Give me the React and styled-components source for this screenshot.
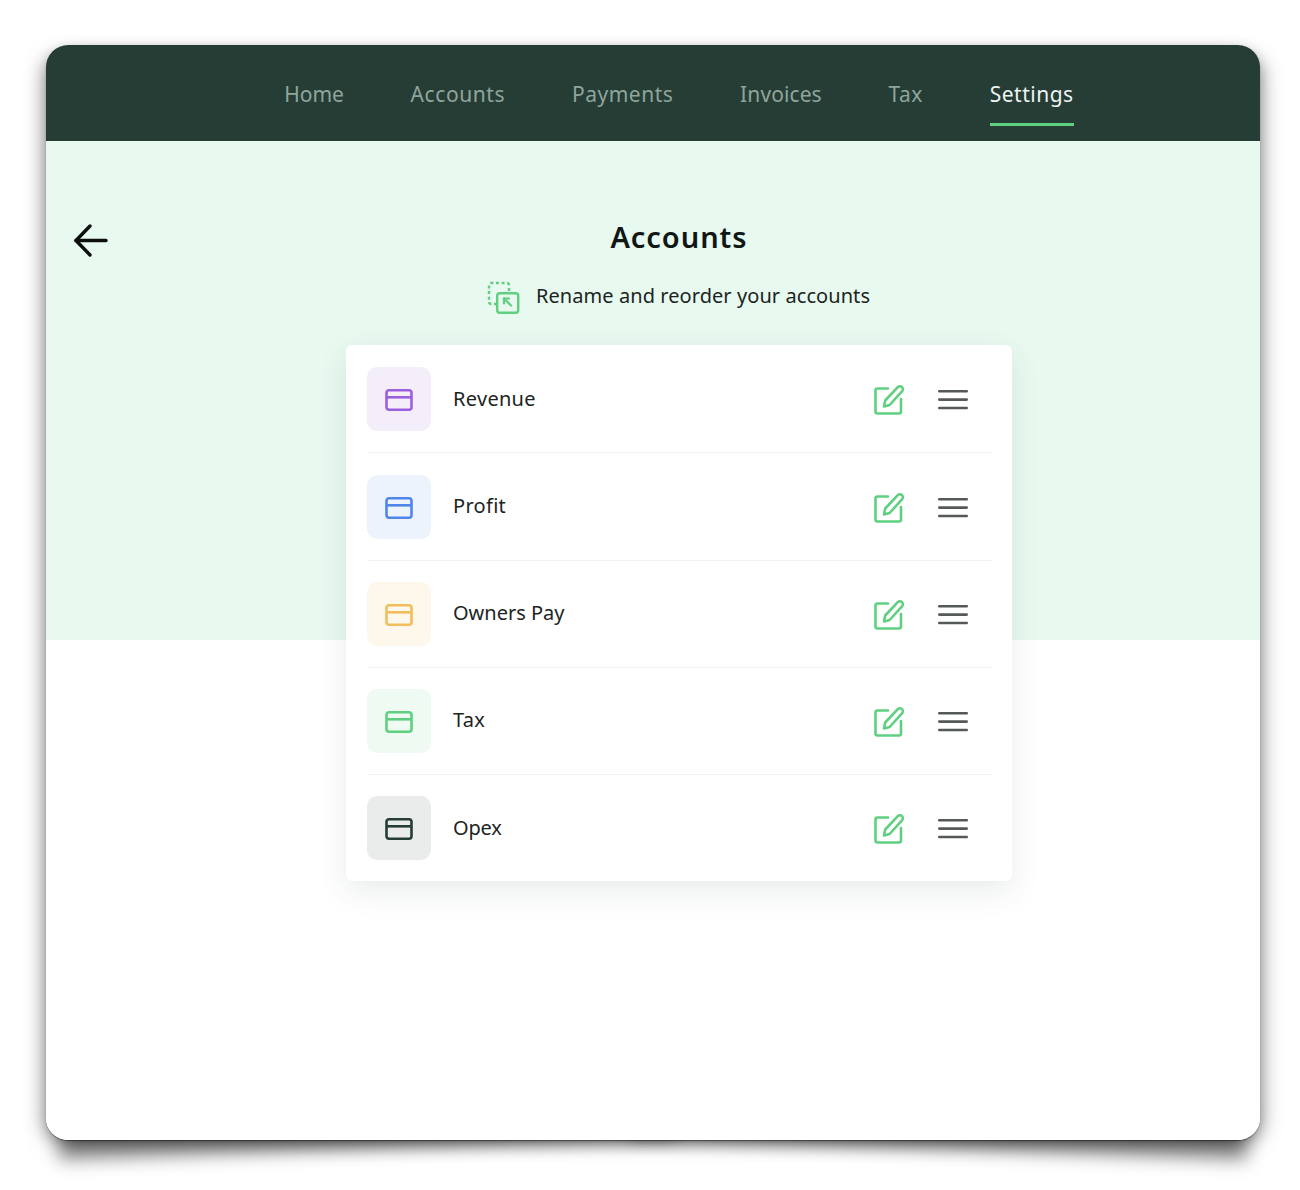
import React from 'react';
import styled, {createGlobalStyle} from "styled-components";

const GlobalStyle = createGlobalStyle`
  html, body {
    margin: 0;
    padding: 0;
    background: #fff;
  }
  * {
    box-sizing: border-box;
  }
  body {
    font-family: "Noto Sans", "Open Sans", sans-serif;
  }
`;

const Page = styled.div`
  width: 1300px;
  height: 1190px;
  padding: 45px 40px 50px 46px;
  overflow: hidden;
`;

const Window = styled.div`
  position: relative;
  isolation: isolate;
  width: 1214px;
  height: 1095px;
  border-radius: 22px;
  box-shadow: -9px 6px 20px -8px rgba(0, 0, 0, 0.5),
    9px 6px 20px -8px rgba(0, 0, 0, 0.5),
    0 -2px 10px rgba(0, 0, 0, 0.05),
    0 1px 1px rgba(0, 0, 0, 0.45);

  /* the lifted corners of the bottom shadow */
  &::before,
  &::after {
    content: "";
    position: absolute;
    z-index: -1;
    bottom: -8px;
    width: 51%;
    height: 40px;
    background: rgba(0, 0, 0, 0.45);
    filter: blur(9px);
  }
  &::before {
    left: 12px;
    transform: rotate(-2.2deg);
  }
  &::after {
    right: 12px;
    transform: rotate(2.2deg);
  }
`;

const Frame = styled.div`
  display: flex;
  flex-direction: column;
  height: 100%;
  border-radius: 22px;
  overflow: hidden;
  background: #fff;
`;

const Nav = styled.nav`
  flex: none;
  display: flex;
  justify-content: center;
  gap: 66.8px;
  height: 96px;
  padding-left: 52px;
  background: #263d36;
`;

const NavItem = styled.a`
  display: flex;
  align-items: center;
  height: 81px;
  padding-top: 20px;
  font-size: 21px;
  letter-spacing: ${(props) => props.spacing}px;
  color: ${(props) => props.active ? "#eef4f1" : "#8ea59c"};
  border-bottom: 3px solid ${(props) => props.active ? "#5fd07f" : "transparent"};
`;

const Main = styled.main`
  flex: 1;
  display: flex;
  padding: 0 10px 0 28px;
  background: linear-gradient(#e8f9f0 499px, #fff 499px);
`;

const BackButton = styled.a`
  flex: none;
  width: 34px;
  height: 34px;
  margin-top: 83px;
  color: #0d0f0e;
`;

const Center = styled.div`
  flex: 1;
  display: flex;
  flex-direction: column;
  align-items: center;
`;

const Title = styled.h1`
  margin: 76px 0 0;
  font-size: 29px;
  line-height: 40px;
  font-weight: 600;
  letter-spacing: 0.95px;
  color: #111714;
`;

const Subtitle = styled.div`
  display: flex;
  align-items: center;
  gap: 16px;
  height: 34px;
  margin-top: 23px;
  padding-right: 2px;
  font-size: 20px;
  letter-spacing: 0.07px;
  color: #1c2421;
`;

const SubtitleText = styled.span`
  padding-bottom: 4px;
`;

const Card = styled.section`
  display: flex;
  flex-direction: column;
  width: 666px;
  height: 536px;
  margin-top: 31px;
  padding: 1.3px 20px 0 21px;
  background: #fff;
  border-radius: 6px;
  box-shadow: 0 10px 30px rgba(38, 61, 54, 0.1);
`;

const Row = styled.div`
  flex: none;
  display: flex;
  align-items: center;
  height: 107.2px;
  padding-right: 24px;
  border-bottom: 1px solid ${(props) => props.last ? "transparent" : "#f0f2f1"};
`;

const IconBox = styled.div`
  flex: none;
  display: flex;
  align-items: center;
  justify-content: center;
  width: 64px;
  height: 64px;
  border-radius: 10px;
  color: ${(props) => props.color};
  background: ${(props) => props.bg};
`;

const Name = styled.span`
  flex: 1;
  margin-left: 22px;
  padding-bottom: 2px;
  font-size: 20px;
  letter-spacing: ${(props) => props.spacing}px;
  color: #1c2421;
`;

const EditButton = styled.a`
  display: flex;
  color: #5fd07f;
  margin-right: 34px;
`;

const DragHandle = styled.a`
  display: flex;
  color: #555957;
`;

const accounts = [
    {name: "Revenue", color: "#9b5fe0", bg: "#f4eefb", spacing: 0.3},
    {name: "Profit", color: "#4f86ec", bg: "#edf3fd", spacing: 0.3},
    {name: "Owners Pay", color: "#f2bd5c", bg: "#fef8ec", spacing: 0},
    {name: "Tax", color: "#5fd07f", bg: "#effaf2", spacing: 0.3},
    {name: "Opex", color: "#263d36", bg: "#e9ecea", spacing: -0.2},
];

const tabs = [
    {label: "Home", spacing: -0.1},
    {label: "Accounts", spacing: 0.6},
    {label: "Payments", spacing: 0.5},
    {label: "Invoices", spacing: 0.1},
    {label: "Tax", spacing: 0.5},
    {label: "Settings", spacing: 0.5, active: true},
];

const ArrowIcon = () => (
    <svg width="34" height="34" viewBox="0 0 34 34" fill="none" stroke="currentColor" strokeWidth="3.4" strokeLinecap="round" strokeLinejoin="round">
        <path d="M32 16.5H2"/>
        <path d="M16 2L2 16.5L16 31"/>
    </svg>
);

const ReorderIcon = () => (
    <svg width="34" height="34" viewBox="0 0 34 34" fill="none" stroke="#5fd07f" strokeWidth="2.4" strokeLinejoin="round">
        <path d="M11 24H5a2 2 0 0 1-2-2V5a2 2 0 0 1 2-2H21a2 2 0 0 1 2 2V13" strokeDasharray="3 2.6"/>
        <rect x="11.2" y="13.2" width="21" height="19.6" rx="2.5"/>
        <g strokeLinecap="round" strokeWidth="2.2">
            <path d="M18 18.5l7 7"/>
            <path d="M18 18.5h5"/>
            <path d="M18 18.5v5"/>
        </g>
    </svg>
);

const CardIcon = () => (
    <svg width="28" height="26" viewBox="0 0 28 26" fill="none" stroke="currentColor" strokeWidth="2.6" strokeLinejoin="round">
        <rect x="1.5" y="4.3" width="25" height="19.4" rx="2.5"/>
        <path d="M1.5 11.3H26.5"/>
    </svg>
);

const EditIcon = () => (
    <svg width="30" height="32" viewBox="0 -1 30 32" fill="none" stroke="currentColor" strokeWidth="2.6" strokeLinecap="round" strokeLinejoin="round">
        <path d="M14 4.5H3.5a2 2 0 0 0-2 2V27.5a2 2 0 0 0 2 2H25a2 2 0 0 0 2-2V15"/>
        <path d="M10 22.5l1.2-6L23.8 3.2a2.9 2.9 0 0 1 4.2 4.1L15.6 21z"/>
    </svg>
);

const MenuIcon = () => (
    <svg width="30" height="22" viewBox="0 0 30 22" fill="none" stroke="currentColor" strokeWidth="2.6" strokeLinecap="round">
        <path d="M1.3 3.2H28.7"/>
        <path d="M1.3 11.6H28.7"/>
        <path d="M1.3 20H28.7"/>
    </svg>
);

const App = () => {
    return (
        <Page>
            <GlobalStyle/>
            <Window>
                <Frame>
                    <Nav>
                        {
                            tabs.map(tab => (
                                <NavItem key={tab.label} active={tab.active} spacing={tab.spacing}>{tab.label}</NavItem>
                            ))
                        }
                    </Nav>
                    <Main>
                        <BackButton><ArrowIcon/></BackButton>
                        <Center>
                            <Title>Accounts</Title>
                            <Subtitle>
                                <ReorderIcon/>
                                <SubtitleText>Rename and reorder your accounts</SubtitleText>
                            </Subtitle>
                            <Card>
                                {
                                    accounts.map((account, index) => (
                                        <Row key={account.name} last={index === accounts.length - 1}>
                                            <IconBox color={account.color} bg={account.bg}><CardIcon/></IconBox>
                                            <Name spacing={account.spacing}>{account.name}</Name>
                                            <EditButton><EditIcon/></EditButton>
                                            <DragHandle><MenuIcon/></DragHandle>
                                        </Row>
                                    ))
                                }
                            </Card>
                        </Center>
                    </Main>
                </Frame>
            </Window>
        </Page>
    );
};

export default App;
